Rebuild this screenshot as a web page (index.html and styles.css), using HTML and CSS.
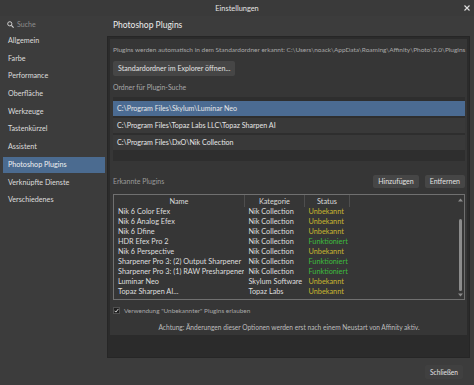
FILE: index.html
```html
<!DOCTYPE html>
<html lang="de">
<head>
    <meta charset="UTF-8">
    <meta name="viewport" content="width=device-width, initial-scale=1.0">
    <title>Einstellungen</title>
    <link rel="stylesheet" href="styles.css">
</head>
<body>
    <div class="window">
        <header class="titlebar">
            <span class="title">Einstellungen</span>
            <span class="close">
                <svg width="6" height="6" viewBox="0 0 6 6"><path d="M0.5 0.5 L5.5 5.5 M5.5 0.5 L0.5 5.5" stroke="#e0e0e0" stroke-width="1.1"/></svg>
            </span>
        </header>

        <div class="main">
            <aside class="sidebar">
                <div class="search">
                    <svg width="7" height="7" viewBox="0 0 7 7"><circle cx="2.8" cy="2.8" r="2.1" fill="none" stroke="#d0d0d0" stroke-width="1"/><path d="M4.4 4.4 L6.6 6.6" stroke="#d0d0d0" stroke-width="1.2"/></svg>
                    <span>Suche</span>
                </div>
                <ul class="nav">
                    <li>Allgemein</li>
                    <li>Farbe</li>
                    <li>Performance</li>
                    <li>Oberfläche</li>
                    <li>Werkzeuge</li>
                    <li>Tastenkürzel</li>
                    <li>Assistent</li>
                    <li class="active">Photoshop Plugins</li>
                    <li>Verknüpfte Dienste</li>
                    <li>Verschiedenes</li>
                </ul>
            </aside>

            <section class="content">
                <h1 class="page-title">Photoshop Plugins</h1>
                <div class="panel">
                    <div class="inner">
                        <p class="info">Plugins werden automatisch in dem Standardordner erkannt: C:\Users\noack\AppData\Roaming\Affinity\Photo\2.0\Plugins</p>
                        <button class="btn open-btn">Standardordner im Explorer öffnen...</button>

                        <p class="caption">Ordner für Plugin-Suche</p>
                        <ul class="folders">
                            <li class="selected">C:\Program Files\Skylum\Luminar Neo</li>
                            <li>C:\Program Files\Topaz Labs LLC\Topaz Sharpen AI</li>
                            <li>C:\Program Files\DxO\Nik Collection</li>
                        </ul>

                        <div class="plugins-head">
                            <span class="caption small">Erkannte Plugins</span>
                            <div class="actions">
                                <button class="btn">Hinzufügen</button>
                                <button class="btn">Entfernen</button>
                            </div>
                        </div>

                        <div class="plugin-table">
                            <table>
                                <thead>
                                    <tr>
                                        <th class="col-name">Name</th>
                                        <th class="col-cat">Kategorie</th>
                                        <th class="col-status">Status</th>
                                        <th class="col-rest"></th>
                                    </tr>
                                </thead>
                                <tbody>
                                    <tr><td>Nik 6 Color Efex</td><td>Nik Collection</td><td class="unknown">Unbekannt</td><td></td></tr>
                                    <tr><td>Nik 6 Analog Efex</td><td>Nik Collection</td><td class="unknown">Unbekannt</td><td></td></tr>
                                    <tr><td>Nik 6 Dfine</td><td>Nik Collection</td><td class="unknown">Unbekannt</td><td></td></tr>
                                    <tr><td>HDR Efex Pro 2</td><td>Nik Collection</td><td class="works">Funktioniert</td><td></td></tr>
                                    <tr><td>Nik 6 Perspective</td><td>Nik Collection</td><td class="unknown">Unbekannt</td><td></td></tr>
                                    <tr><td>Sharpener Pro 3: (2) Output Sharpener</td><td>Nik Collection</td><td class="works">Funktioniert</td><td></td></tr>
                                    <tr><td>Sharpener Pro 3: (1) RAW Presharpener</td><td>Nik Collection</td><td class="works">Funktioniert</td><td></td></tr>
                                    <tr><td>Luminar Neo</td><td>Skylum Software</td><td class="unknown">Unbekannt</td><td></td></tr>
                                    <tr><td>Topaz Sharpen AI...</td><td>Topaz Labs</td><td class="unknown">Unbekannt</td><td></td></tr>
                                </tbody>
                            </table>
                            <div class="scrollbar">
                                <svg width="5" height="4" viewBox="0 0 5 4"><path d="M0 3.5 L2.5 0.5 L5 3.5 Z" fill="#8a8a8a"/></svg>
                                <div class="track"><div class="thumb"></div></div>
                                <svg width="5" height="4" viewBox="0 0 5 4"><path d="M0 0.5 L2.5 3.5 L5 0.5 Z" fill="#8a8a8a"/></svg>
                            </div>
                        </div>

                        <label class="check">
                            <span class="box">
                                <svg width="5" height="5" viewBox="0 0 5 5"><path d="M0.6 2.8 L1.9 4.1 L4.4 0.9" fill="none" stroke="#e8e8e8" stroke-width="0.9"/></svg>
                            </span>
                            Verwendung "Unbekannter" Plugins erlauben
                        </label>

                        <p class="notice">Achtung: Änderungen dieser Optionen werden erst nach einem Neustart von Affinity aktiv.</p>
                    </div>
                </div>
            </section>
        </div>

        <footer class="footer">
            <button class="btn close-btn">Schließen</button>
        </footer>
    </div>
</body>
</html>
```

FILE: styles.css
```css
* {
    margin: 0;
    padding: 0;
    box-sizing: border-box;
}

body {
    background-color: #3c3c3c;
    font-family: Lato, 'Open Sans', sans-serif;
    font-size: 7px;
    color: #d8d8d8;
}

.window {
    width: 474px;
    height: 385px;
    display: flex;
    flex-direction: column;
}

/* title bar */
.titlebar {
    height: 16px;
    display: grid;
    grid-template-columns: 1fr auto 1fr;
    align-items: center;
    background-color: #3a3a3a;
}

.titlebar .title {
    grid-column: 2;
    font-size: 7.4px;
    color: #e4e4e4;
}

.titlebar .close {
    justify-self: end;
    display: flex;
    margin-right: 4px;
}

.main {
    flex: 1;
    display: flex;
}

/* sidebar */
.sidebar {
    width: 107px;
    flex-shrink: 0;
    padding-right: 2px;
}

.search {
    height: 16px;
    display: flex;
    align-items: center;
    gap: 3px;
    padding-left: 7px;
    color: #8e8e8e;
}

.nav {
    list-style: none;
}

.nav li {
    height: 17.7px;
    line-height: 15.7px;
    margin-left: 3px;
    padding-left: 5px;
    border-top: 1px solid transparent;
    border-bottom: 1px solid transparent;
    background-clip: padding-box;
    font-size: 7.2px;
    color: #dcdcdc;
}

.nav li.active {
    background-color: #4b6b90;
    color: #f0f0f0;
}

/* content */
.content {
    flex: 1;
    min-width: 0;
    display: flex;
    flex-direction: column;
    padding-right: 4px;
}

.page-title {
    height: 20px;
    line-height: 19px;
    padding-left: 6px;
    font-size: 8.5px;
    font-weight: normal;
    color: #ececec;
}

.panel {
    flex: 1;
    display: flex;
    background-color: #2b2b2b;
    border: 1px solid #262626;
    padding: 2px 2px 22px 2px;
}

.inner {
    flex: 1;
    min-width: 0;
    display: flex;
    flex-direction: column;
    background-color: #363636;
    padding: 6px 2px 0 3px;
}

.info {
    line-height: 10px;
    font-size: 6.5px;
    color: #a8a8a8;
    white-space: nowrap;
}

.btn {
    height: 14px;
    padding: 0 5px;
    border: none;
    border-radius: 2px;
    background-color: #464646;
    color: #e2e2e2;
    font-family: inherit;
    font-size: 7px;
}

.open-btn {
    align-self: flex-start;
    height: 15px;
    margin-top: 6px;
    padding: 0 5px;
    font-size: 7.1px;
}

.caption {
    margin-top: 6px;
    line-height: 10px;
    font-size: 6.9px;
    color: #a8a8a8;
}

.caption.small {
    margin-top: 0;
    font-size: 7px;
    color: #9a9a9a;
}

.folders {
    list-style: none;
    height: 64px;
    margin-top: 5px;
    padding-top: 4px;
    background-color: #2e2e2e;
}

.folders li {
    height: 15px;
    line-height: 15px;
    padding-left: 4px;
    margin-bottom: 2px;
    background-color: #393939;
    font-size: 7.1px;
    color: #e6e6e6;
}

.folders li.selected {
    background-color: #4b6b92;
}

.plugins-head {
    height: 18px;
    margin-top: 11px;
    display: flex;
    align-items: center;
    justify-content: space-between;
}

.actions {
    display: flex;
    gap: 6px;
}

.actions .btn {
    height: 13px;
    padding: 0 5px;
}

/* plugin table */
.plugin-table {
    height: 106px;
    margin-top: 4px;
    display: flex;
    border: 1px solid #707070;
}

.plugin-table table {
    flex: 1;
    align-self: flex-start;
    table-layout: fixed;
    border-collapse: collapse;
    font-size: 7.3px;
}

.plugin-table th {
    height: 12px;
    font-weight: normal;
    color: #dadada;
    border-right: 1px solid #4e4e4e;
}

.plugin-table th.col-rest {
    border-right: none;
}

.col-name {
    width: 129px;
}

.col-cat {
    width: 60px;
}

.col-status {
    width: 45px;
}

.plugin-table td {
    height: 10px;
    line-height: 10px;
    padding-left: 4px;
    white-space: nowrap;
    overflow: hidden;
    color: #dedede;
}

.plugin-table td.unknown {
    color: #c8b52e;
}

.plugin-table td.works {
    color: #3dbb3d;
}

.scrollbar {
    width: 8px;
    display: flex;
    flex-direction: column;
    align-items: center;
    padding: 3px 0 2px;
}

.scrollbar .track {
    flex: 1;
    display: flex;
    justify-content: center;
    padding: 17px 0 2px;
}

.scrollbar .thumb {
    width: 3px;
    height: 100%;
    border-radius: 2px;
    background-color: #8c8c8c;
}

.check {
    height: 12px;
    margin-top: 4px;
    display: flex;
    align-items: center;
    gap: 4px;
    font-size: 6.4px;
    color: #a8a8a8;
}

.check .box {
    width: 7px;
    height: 7px;
    display: flex;
    align-items: center;
    justify-content: center;
    background-color: #1f1f1f;
    border: 1px solid #505050;
}

.notice {
    margin-top: 6px;
    line-height: 10px;
    font-size: 6.6px;
    text-align: center;
    color: #bdbdbd;
}

/* footer */
.footer {
    height: 27px;
    display: flex;
    align-items: center;
    justify-content: flex-end;
    padding-right: 11px;
}

.close-btn {
    width: 38px;
    padding: 0;
    font-size: 6.6px;
    background-color: #404040;
}
```
